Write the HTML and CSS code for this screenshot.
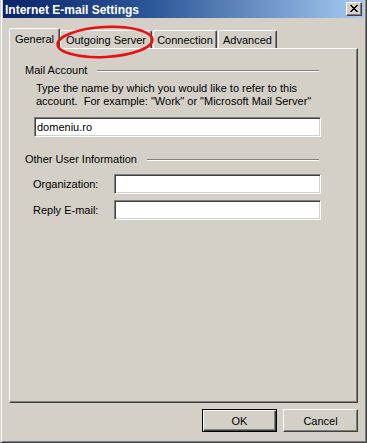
FILE: index.html
```html
<!DOCTYPE html>
<html>
<head>
<meta charset="utf-8">
<title>Internet E-mail Settings</title>
<link rel="stylesheet" href="styles.css">
</head>
<body>
<div class="window">
  <div class="titlebar">
    <span class="title">Internet E-mail Settings</span>
    <div class="close">
      <svg width="8" height="7" viewBox="0 0 8 7" shape-rendering="crispEdges">
        <rect x="0" y="0" width="2" height="1"/><rect x="6" y="0" width="2" height="1"/>
        <rect x="1" y="1" width="2" height="1"/><rect x="5" y="1" width="2" height="1"/>
        <rect x="2" y="2" width="4" height="1"/>
        <rect x="3" y="3" width="2" height="1"/>
        <rect x="2" y="4" width="4" height="1"/>
        <rect x="1" y="5" width="2" height="1"/><rect x="5" y="5" width="2" height="1"/>
        <rect x="0" y="6" width="2" height="1"/><rect x="6" y="6" width="2" height="1"/>
      </svg>
    </div>
  </div>
  <div class="content">
    <div class="tabs">
      <div class="tab tab-active tab-general">General</div>
      <div class="tab tab-outgoing">Outgoing Server</div>
      <div class="tab tab-connection">Connection</div>
      <div class="tab tab-advanced">Advanced</div>
      <svg class="highlight" width="100" height="36" viewBox="0 0 100 36">
        <ellipse cx="50" cy="17" rx="47.5" ry="15" fill="none" stroke="#e81010" stroke-width="2.6" transform="rotate(-3 50 17)"/>
      </svg>
    </div>
    <div class="panel">
      <div class="group-header">
        <span class="group-title">Mail Account</span>
        <span class="rule"></span>
      </div>
      <p class="desc">Type the name by which you would like to refer to this<br>account.&nbsp; For example: "Work" or "Microsoft Mail Server"</p>
      <div class="field field-account">domeniu.ro</div>

      <div class="group-header group-header-second">
        <span class="group-title">Other User Information</span>
        <span class="rule"></span>
      </div>
      <div class="row row-first">
        <span class="row-label">Organization:</span>
        <div class="field field-row"></div>
      </div>
      <div class="row">
        <span class="row-label">Reply E-mail:</span>
        <div class="field field-row"></div>
      </div>
    </div>
    <div class="buttons">
      <div class="btn btn-default">OK</div>
      <div class="btn">Cancel</div>
    </div>
  </div>
</div>
</body>
</html>
```
FILE: styles.css
```css
html, body {
  margin: 0;
  padding: 0;
  background: #d4d0c8;
}

body {
  font-family: "Liberation Sans", Arial, sans-serif;
  font-size: 11px;
  color: #000;
}

.window {
  width: 367px;
  height: 443px;
  box-sizing: border-box;
  display: flex;
  flex-direction: column;
  background: #d4d0c8;
  border-style: solid;
  border-width: 0 1px 1px 1px;
  border-color: #d4d0c8 #404040 #404040 #d4d0c8;
  box-shadow: inset 1px 0 #ffffff, inset -1px -1px #808080;
  padding: 0 2px 2px 2px;
}

.titlebar {
  height: 18px;
  flex: none;
  display: flex;
  align-items: center;
  justify-content: space-between;
  padding: 0 2px 0 2px;
  background: linear-gradient(to right, #0a246a 0%, #2a5596 40%, #a6caf0 100%);
}

.title {
  color: #fff;
  font-weight: bold;
  font-size: 12px;
  line-height: 14px;
  padding-top: 1px;
}

.close {
  width: 16px;
  height: 14px;
  box-sizing: border-box;
  background: #d4d0c8;
  border: 1px solid;
  border-color: #ffffff #404040 #404040 #ffffff;
  box-shadow: inset -1px -1px #808080;
  display: flex;
  align-items: flex-start;
  justify-content: center;
  padding-top: 2px;
  padding-right: 1px;
}

.close svg {
  display: block;
  fill: #000;
}

.content {
  flex: 1;
  display: flex;
  flex-direction: column;
  padding: 10px 6px 8px 6px;
}

.tabs {
  position: relative;
  height: 20px;
  flex: none;
  display: flex;
  align-items: flex-end;
  z-index: 1;
}

.tab {
  box-sizing: border-box;
  height: 18px;
  flex: none;
  display: flex;
  align-items: center;
  justify-content: center;
  padding-top: 1px;
  background: #d4d0c8;
  border-top: 1px solid #ffffff;
  border-left: 1px solid #ffffff;
  border-right: 1px solid #404040;
  box-shadow: inset -1px 0 #808080;
  border-top-left-radius: 2px;
  border-top-right-radius: 2px;
  white-space: nowrap;
}

.tab-active {
  height: 21px;
  margin-bottom: -1px;
  padding-top: 0;
  padding-bottom: 1px;
  position: relative;
}

.tab-general { width: 51px; }
.tab-outgoing { width: 92px; }
.tab-connection { width: 64px; margin-left: 1px; }
.tab-advanced { width: 59px; margin-left: 1px; }

.highlight {
  position: absolute;
  left: 46px;
  top: -3px;
  overflow: visible;
  pointer-events: none;
}

.panel {
  flex: 1;
  box-sizing: border-box;
  border: 1px solid;
  border-color: #ffffff #404040 #404040 #ffffff;
  box-shadow: inset -1px -1px #808080;
  padding: 15px 36px 0 15px;
}

.group-header {
  display: flex;
  align-items: center;
  height: 13px;
  line-height: 13px;
}

.group-header-second {
  margin-top: 16px;
}

.rule {
  flex: 1;
  height: 0;
  margin-left: 10px;
  margin-right: 2px;
  border-top: 1px solid #808080;
  border-bottom: 1px solid #ffffff;
}

.desc {
  margin: 5px 0 0 11px;
  line-height: 13px;
}

.field {
  box-sizing: border-box;
  height: 20px;
  background: #fff;
  border: 1px solid;
  border-color: #808080 #ffffff #ffffff #808080;
  box-shadow: inset 1px 1px #404040, inset -1px -1px #d4d0c8;
  line-height: 18px;
  padding-left: 2px;
}

.field-account {
  margin: 9px 0 0 9px;
}

.row {
  display: flex;
  align-items: center;
  margin-top: 6px;
}

.row-first {
  margin-top: 8px;
}

.row-label {
  width: 81px;
  padding-left: 8px;
  flex: none;
}

.field-row {
  flex: 1;
}

.buttons {
  flex: none;
  display: flex;
  justify-content: flex-end;
  gap: 6px;
  margin-top: 6px;
}

.btn {
  width: 75px;
  height: 23px;
  box-sizing: border-box;
  display: flex;
  align-items: center;
  justify-content: center;
  background: #d4d0c8;
  border: 1px solid;
  border-color: #ffffff #404040 #404040 #ffffff;
  box-shadow: inset -1px -1px #808080;
}

.btn-default {
  border-color: #000;
  box-shadow: inset 1px 1px #ffffff, inset -1px -1px #404040, inset -2px -2px #808080;
}
```
